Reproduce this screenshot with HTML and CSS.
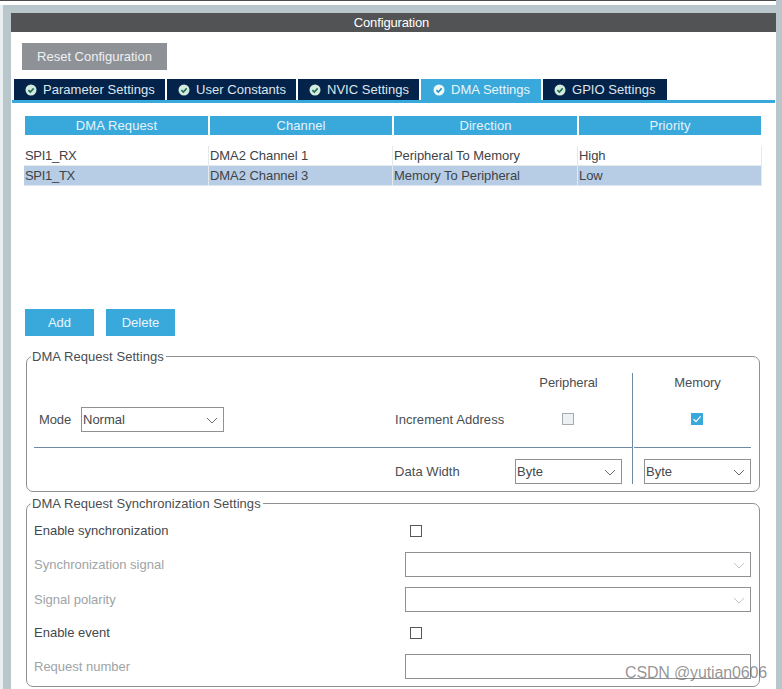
FILE: index.html
```html
<!DOCTYPE html>
<html lang="en">
<head>
<meta charset="utf-8">
<title>Configuration</title>
<link rel="stylesheet" href="styles.css">
</head>
<body>
<div class="app">
  <main class="main">
    <div class="topline"></div>
    <header class="title">Configuration</header>
    <section class="panel">
      <button class="reset">Reset Configuration</button>
      <nav class="tabs">
        <div class="tab"><svg class="tick" viewBox="0 0 12 12"><circle class="tick-bg" cx="6" cy="6" r="5.5"/><path class="tick-mark" d="M3.4 6.1 5.3 8 8.7 4.4"/></svg>Parameter Settings</div>
        <div class="tab t2"><svg class="tick" viewBox="0 0 12 12"><circle class="tick-bg" cx="6" cy="6" r="5.5"/><path class="tick-mark" d="M3.4 6.1 5.3 8 8.7 4.4"/></svg>User Constants</div>
        <div class="tab t3"><svg class="tick" viewBox="0 0 12 12"><circle class="tick-bg" cx="6" cy="6" r="5.5"/><path class="tick-mark" d="M3.4 6.1 5.3 8 8.7 4.4"/></svg>NVIC Settings</div>
        <div class="tab t4 active"><svg class="tick" viewBox="0 0 12 12"><circle class="tick-bg" cx="6" cy="6" r="5.5"/><path class="tick-mark" d="M3.4 6.1 5.3 8 8.7 4.4"/></svg>DMA Settings</div>
        <div class="tab t5"><svg class="tick" viewBox="0 0 12 12"><circle class="tick-bg" cx="6" cy="6" r="5.5"/><path class="tick-mark" d="M3.4 6.1 5.3 8 8.7 4.4"/></svg>GPIO Settings</div>
      </nav>
      <div class="table">
        <div class="thead">
          <div>DMA Request</div><div>Channel</div><div>Direction</div><div>Priority</div>
        </div>
        <div class="trow">
          <div class="req">SPI1_RX</div><div>DMA2 Channel 1</div><div>Peripheral To Memory</div><div>High</div>
        </div>
        <div class="trow selected">
          <div class="req">SPI1_TX</div><div>DMA2 Channel 3</div><div>Memory To Peripheral</div><div>Low</div>
        </div>
      </div>
      <div class="actions">
        <button class="action">Add</button>
        <button class="action">Delete</button>
      </div>
      <fieldset class="group first">
        <legend>DMA Request Settings</legend>
        <div class="req-grid">
          <div class="col-head peri">Peripheral</div>
          <div class="col-head mem">Memory</div>
          <div class="mode">
            <span class="mode-label">Mode</span>
            <div class="select mode-select">Normal<svg class="chev" viewBox="0 0 12 7"><path d="M1 1l5 5 5-5"/></svg></div>
          </div>
          <div class="inc">Increment Address</div>
          <div class="cell peri"><span class="check disabled"></span></div>
          <div class="cell mem"><span class="check on"><svg viewBox="0 0 12 12"><path d="M2.6 6.2 5 8.6 9.6 3.4"/></svg></span></div>
          <div class="hr"></div>
          <div class="inc width">Data Width</div>
          <div class="select peri-select">Byte<svg class="chev" viewBox="0 0 12 7"><path d="M1 1l5 5 5-5"/></svg></div>
          <div class="select mem-select">Byte<svg class="chev" viewBox="0 0 12 7"><path d="M1 1l5 5 5-5"/></svg></div>
          <div class="vr"></div>
        </div>
      </fieldset>
      <fieldset class="group second">
        <legend>DMA Request Synchronization Settings</legend>
        <div class="sync">
          <div class="row short"><span class="short-label">Enable synchronization</span><span class="check plain"></span></div>
          <div class="row muted"><span>Synchronization signal</span><div class="select wide"><svg class="chev faint" viewBox="0 0 12 7"><path d="M1 1l5 5 5-5"/></svg></div></div>
          <div class="row muted"><span>Signal polarity</span><div class="select wide"><svg class="chev faint" viewBox="0 0 12 7"><path d="M1 1l5 5 5-5"/></svg></div></div>
          <div class="row short"><span class="short-label">Enable event</span><span class="check plain"></span></div>
          <div class="row muted"><span>Request number</span><div class="select wide"></div></div>
        </div>
      </fieldset>
    </section>
  </main>
  <div class="watermark">CSDN @yutian0606</div>
</div>
</body>
</html>
```
FILE: styles.css
```css
* { box-sizing: border-box; }
html, body { margin: 0; height: 100%; }
body { font-family: "Liberation Sans", Arial, sans-serif; font-size: 13px; color: #4a4e52; overflow: hidden; }
.app { position: relative; height: 689px; background: #b9c6cc; border-left: 3px solid #e9eff1; padding: 0 6px 0 8px; }
.main { display: flex; flex-direction: column; height: 100%; }
.topline { height: 5px; margin: 0 0 8px -11px; background: #fff; border-top: 1px solid #4c4c4c; }
.title { height: 19px; background: #525354; color: #fff; text-align: center; line-height: 20px; letter-spacing: -.15px; padding-right: 4px; }
.panel { flex: 1; background: #fff; display: flex; flex-direction: column; align-items: flex-start; padding: 11px 0 0; }
button { font: inherit; border: 0; color: #fff; padding: 0; }
.reset { width: 145px; height: 27px; margin-left: 11px; background: #8e9297; color: #eef0f2; }
.tabs { display: flex; gap: 2px; height: 24px; margin-top: 9px; margin-left: 1px; width: 763px; padding: 0 0 3px 2px; border-bottom: 3px solid #39a9dc; }
.tab { width: 151px; height: 21px; background: #03234b; color: #dfe6ec; display: flex; align-items: center; padding-left: 11px; letter-spacing: .03px; white-space: nowrap; }
.t2 { width: 129px; }
.t3 { width: 121px; }
.t4 { width: 120px; padding-left: 12px; }
.t5 { width: 124px; padding-left: 11px; }
.active { background: #39a9dc; color: #eaf5fb; }
.tick { width: 12px; height: 12px; margin-right: 6px; flex: none; }
.tick-bg { fill: #d3ebdd; }
.tick-mark { fill: none; stroke: #1d6f58; stroke-width: 1.6; }
.active .tick-bg { fill: #eef8f6; }
.active .tick-mark { stroke: #2d93c4; }
.table { margin: 13px 0 0 13px; width: 738px; }
.thead, .trow { display: grid; }
.thead { margin-left: 1px; width: 736px; grid-template-columns: 183px 182px 183px 182px; gap: 2px; margin-bottom: 11px; }
.thead div { height: 19px; background: #39a9dc; color: #e6f4fb; text-align: center; line-height: 20px; letter-spacing: .1px; }
.trow { grid-template-columns: 185px 184px 185px 184px; height: 20px; line-height: 20px; color: #3f4347; letter-spacing: -.05px; border-bottom: 1px solid #e6e9ec; }
.trow div { padding-left: 1px; border-right: 1px solid #e6e9ec; }
.trow .req { letter-spacing: -.3px; }
.selected { background: #b7cde5; border-bottom-color: #dfe5ec; }
.actions { display: flex; gap: 12px; margin: 123px 0 0 14px; }
.action { width: 69px; height: 27px; background: #39a9dc; color: #eaf5fb; }
.group { margin: 0 0 0 15px; padding: 0; width: 734px; border: 1px solid #8f9194; border-radius: 7px; min-width: 0; }
.group legend { margin-left: 4px; padding: 0 2px 0 1px; font-size: 13px; line-height: 14px; letter-spacing: .05px; color: #4a4e52; transform: translateY(1px); }
.first { height: 143px; margin-top: 13px; }
.second { height: 191px; margin-top: 4px; }
.req-grid { position: relative; display: grid; grid-template-columns: 361px 120px 107px 22px 107px; grid-template-rows: 20px 54px 1px 36px; margin: 10px 0 0 7px; width: 717px; }
.col-head { grid-row: 1; text-align: center; padding-top: 2px; letter-spacing: -.1px; }
.col-head.peri { grid-column: 3; }
.col-head.mem { grid-column: 5; }
.mode { grid-row: 2; grid-column: 1; display: flex; align-items: center; padding: 0 0 1px 5px; }
.mode-label { width: 42px; letter-spacing: -.1px; }
.inc { grid-row: 2; grid-column: 2; align-self: center; letter-spacing: .05px; padding: 0 0 2px; white-space: nowrap; }
.cell { grid-row: 2; display: flex; justify-content: center; align-items: center; padding: 0 1px 2px 0; }
.cell.peri { grid-column: 3; }
.cell.mem { grid-column: 5; }
.hr { grid-row: 3; grid-column: 1 / -1; background: #6f8aa3; }
.inc.width { grid-row: 4; padding: 10px 0 0; }
.select { position: relative; height: 25px; border: 1px solid #8f9194; background: #fff; display: flex; align-items: center; padding-left: 1px; color: #44484c; }
.mode-select { width: 143px; }
.peri-select { grid-row: 4; grid-column: 3; align-self: end; }
.mem-select { grid-row: 4; grid-column: 5; align-self: end; }
.chev { position: absolute; right: 5px; top: 9px; width: 12px; height: 7px; fill: none; stroke: #6a6e72; stroke-width: 1; }
.chev.faint { stroke: #c4c6c8; }
.vr { position: absolute; left: 598px; top: 0; bottom: 0; width: 2px; background: #6f8aa3; border-right: 1px solid #fff; }
.check { display: block; width: 12px; height: 12px; border: 1px solid #55585b; background: #fff; }
.check.disabled { background: #eef1f3; border-color: #a9acaf; }
.check.on { background: #39a9dc; border: 0; }
.check.on svg { display: block; width: 12px; height: 12px; fill: none; stroke: #fff; stroke-width: 1.3; }
.sync { margin: 5px 8px 0 7px; }
.row { display: grid; grid-template-columns: 371px 346px; align-items: center; height: 35px; color: #44484c; }
.row.short { height: 32px; }
.short-label { padding-bottom: 2px; }
.row.short .check { margin-left: 5px; }
.row.muted > span { color: #a0a3a6; }
.wide { width: 346px; }
.watermark { position: absolute; left: 622px; top: 664px; font-size: 16px; line-height: 18px; letter-spacing: -.15px; color: rgba(90, 90, 90, .65); }
```
